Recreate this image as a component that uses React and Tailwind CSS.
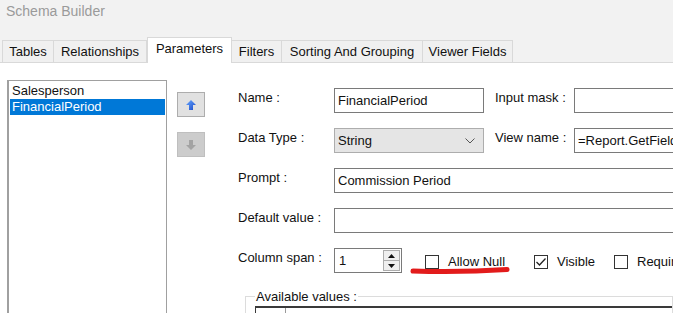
import React from "react";

const font = { fontFamily: '"Liberation Sans", Arial, sans-serif' };

function Tab({ label, w, selected, first }) {
  if (selected) {
    return (
      <div
        className={`h-[26px] ${w} bg-white border border-b-0 border-[#d9d9d9] -mb-px flex items-center justify-center pb-[3px] text-[#111] relative z-10`}
      >
        {label}
      </div>
    );
  }
  return (
    <div
      className={`h-[22px] ${w} bg-[#f0f0f0] border-t border-r ${first ? "border-l" : ""} border-[#d9d9d9] flex items-center justify-center text-[#111]`}
    >
      {label}
    </div>
  );
}

function Label({ children, w }) {
  return (
    <div className={`${w} shrink-0 pt-[2px] leading-[15px] text-[#111] whitespace-nowrap`}>
      {children}
    </div>
  );
}

function TextBox({ w, value }) {
  return (
    <div
      className={`${w} shrink-0 h-[25px] border border-[#7a7a7a] bg-white flex items-center pl-[3px] text-[#111] whitespace-nowrap overflow-hidden`}
    >
      {value}
    </div>
  );
}

function CheckBox({ checked, label, w }) {
  return (
    <div className={`flex items-center ${w} shrink-0`}>
      <div className="w-[14px] h-[14px] border border-[#333] bg-white flex items-center justify-center shrink-0">
        {checked && (
          <svg width="12" height="12" viewBox="0 0 12 12">
            <polyline points="1.5,6 4.5,9 10.5,2.5" fill="none" stroke="#222" strokeWidth="1.3" />
          </svg>
        )}
      </div>
      <span className="ml-[9px] text-[#111] whitespace-nowrap">{label}</span>
    </div>
  );
}

export default function App() {
  return (
    <div
      className="relative w-[673px] h-[313px] overflow-hidden bg-[#f2f2f2] text-[13px] flex flex-col"
      style={font}
    >
      {/* title */}
      <div className="h-[37px] shrink-0 pl-[6px] pt-[3px] text-[14px] text-[#9a9a9a] leading-[16px]">
        Schema Builder
      </div>

      {/* tabs */}
      <div className="h-[26px] shrink-0 flex items-end pl-[2px] border-b border-[#d9d9d9]">
        <Tab label="Tables" w="w-[52px]" first />
        <Tab label="Relationships" w="w-[93px]" />
        <Tab label="Parameters" w="w-[85px]" selected />
        <Tab label="Filters" w="w-[50px]" />
        <Tab label="Sorting And Grouping" w="w-[141px]" />
        <Tab label="Viewer Fields" w="w-[90px]" />
      </div>

      {/* content */}
      <div className="flex-1 bg-white flex min-h-0">
        {/* list */}
        <div className="ml-[7px] mt-[17px] w-[160px] h-[260px] shrink-0 border border-[#a0a0a0] border-l-2 pt-[2px] px-[1px] leading-[16px] text-[13px]">
          <div className="h-[16px] pl-[2px] text-[#111]">Salesperson</div>
          <div className="h-[16px] pl-[2px] bg-[#0078d7] text-white">FinancialPeriod</div>
        </div>

        {/* move buttons */}
        <div className="ml-[10px] mt-[29px] w-[28px] shrink-0 flex flex-col gap-[15px]">
          <div className="h-[25px] bg-[#e1e1e1] border border-[#adadad] flex items-center justify-center">
            <svg width="10" height="10" viewBox="0 0 10 10">
              <defs>
                <linearGradient id="ub" x1="0" y1="0" x2="1" y2="1">
                  <stop offset="0" stopColor="#6aa9ff" />
                  <stop offset="1" stopColor="#1848c8" />
                </linearGradient>
              </defs>
              <polygon points="5,0 10,5 7,5 7,10 3,10 3,5 0,5" fill="url(#ub)" />
            </svg>
          </div>
          <div className="h-[25px] bg-[#cccccc] border border-[#bfbfbf] flex items-center justify-center">
            <svg width="10" height="10" viewBox="0 0 10 10">
              <polygon points="3,0 7,0 7,5 10,5 5,10 0,5 3,5" fill="#a3a3a3" />
            </svg>
          </div>
        </div>

        {/* form */}
        <div className="ml-[33px] mt-[25px] flex-1 min-w-0 flex flex-col gap-[15px]">
          <div className="flex h-[25px]">
            <Label w="w-[96px]">Name :</Label>
            <TextBox w="w-[150px]" value="FinancialPeriod" />
            <div className="ml-[11px]">
              <Label w="w-[79px]">Input mask :</Label>
            </div>
            <TextBox w="w-[120px]" value="" />
          </div>

          <div className="flex h-[25px]">
            <Label w="w-[96px]">Data Type :</Label>
            <div className="w-[150px] shrink-0 h-[25px] border border-[#adadad] bg-[#e5e5e5] flex items-center pl-[3px] pr-[8px] text-[#111]">
              <span className="flex-1">String</span>
              <svg width="10" height="6" viewBox="0 0 10 6">
                <polyline points="0.5,0.5 5,5 9.5,0.5" fill="none" stroke="#555" strokeWidth="1" />
              </svg>
            </div>
            <div className="ml-[11px]">
              <Label w="w-[79px]">View name :</Label>
            </div>
            <TextBox w="w-[120px]" value={'=Report.GetFieldValue("Period")'} />
          </div>

          <div className="flex h-[25px]">
            <Label w="w-[96px]">Prompt :</Label>
            <TextBox w="w-[400px]" value="Commission Period" />
          </div>

          <div className="flex h-[25px]">
            <Label w="w-[96px]">Default value :</Label>
            <TextBox w="w-[400px]" value="" />
          </div>

          <div className="flex h-[25px]">
            <Label w="w-[96px]">Column span :</Label>
            <div className="w-[68px] shrink-0 h-[25px] border border-[#7a7a7a] bg-white flex items-center pl-[4px] text-[#111]">
              <span className="flex-1">1</span>
              <div className="w-[17px] h-[21px] mr-[1px] border border-[#adadad] bg-[#efefef] flex flex-col">
                <div className="flex-1 flex items-center justify-center border-b border-[#adadad]">
                  <svg width="7" height="4" viewBox="0 0 7 4">
                    <polygon points="3.5,0 7,4 0,4" fill="#111" />
                  </svg>
                </div>
                <div className="flex-1 flex items-center justify-center">
                  <svg width="7" height="4" viewBox="0 0 7 4">
                    <polygon points="0,0 7,0 3.5,4" fill="#111" />
                  </svg>
                </div>
              </div>
            </div>
            <div className="ml-[23px] flex items-center h-[25px] pt-[2px]">
              <CheckBox label="Allow Null" w="w-[109px]" />
              <CheckBox checked label="Visible" w="w-[80px]" />
              <CheckBox label="Required" w="w-[90px]" />
            </div>
          </div>

          <fieldset className="ml-[7px] mt-[1px] border border-[#dcdcdc] h-[60px] pl-[9px] pt-[2px]">
            <legend className="px-[1px] leading-[15px] text-[#111]">Available values :</legend>
            <div className="h-[30px] border-t-2 border-l border-[#3a3a3a] flex">
              <div className="w-[30px] border-r border-[#9a9a9a]" />
            </div>
          </fieldset>
        </div>
      </div>

      {/* red annotation stroke */}
      <svg
        className="absolute left-[406px] top-[261px]"
        width="110"
        height="16"
        viewBox="0 0 110 16"
      >
        <path d="M7 10 Q 55 11.5 101 8.5" fill="none" stroke="#e21b1b" strokeWidth="5" strokeLinecap="round" />
      </svg>
    </div>
  );
}
